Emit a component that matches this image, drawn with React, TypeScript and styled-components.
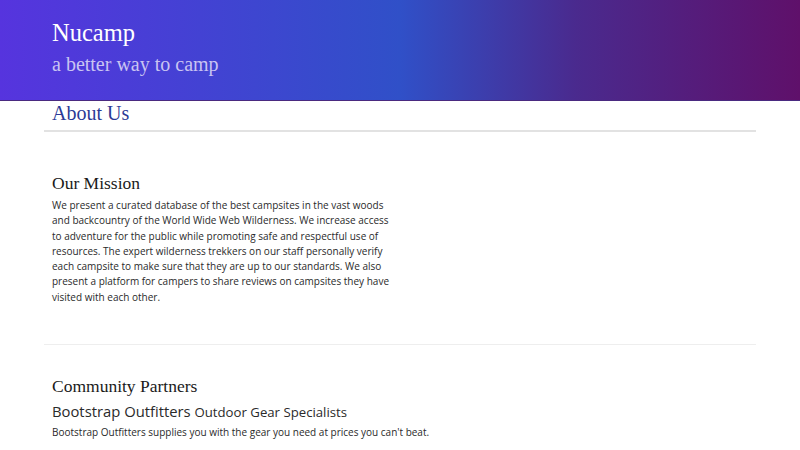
import React from "react";
import styled, { createGlobalStyle } from "styled-components";

const Global = createGlobalStyle`
  html, body { margin: 0; padding: 0; background: #fff; }
  body { font-family: "Open Sans", sans-serif; color: #212529; }
  * { box-sizing: border-box; }
`;

const Jumbotron = styled.header`
  height: 101px;
  background: linear-gradient(90deg, #5634de 0%, #3050c8 50%, #4a2a8e 72%, #5f106a 100%);
  border-bottom: 1px solid #4a2a80;
  padding: 18px 52px 0;
`;

const Brand = styled.h1`
  margin: 0;
  font-family: "Liberation Serif", serif;
  font-weight: 400;
  font-size: 24.5px;
  line-height: 30px;
  color: #ffffff;
`;

const Tagline = styled.h2`
  margin: 4px 0 0;
  font-family: "Liberation Serif", serif;
  font-weight: 400;
  font-size: 20px;
  line-height: 24px;
  color: #c9c4f2;
`;

const Container = styled.main`
  margin: 0 44px;
`;

const PageTitle = styled.h2`
  margin: 0;
  padding: 0 8px 4px;
  font-family: "Liberation Serif", serif;
  font-weight: 400;
  font-size: 20px;
  line-height: 25px;
  color: #2b3a96;
  border-bottom: 2px solid #e2e2e2;
`;

const Section = styled.section<{ $half?: boolean; $top: number }>`
  padding: ${(p) => p.$top}px 8px 0;
  width: ${(p) => (p.$half ? "356px" : "auto")};
`;

const SectionTitle = styled.h3`
  margin: 0 0 3px;
  font-family: "Liberation Serif", serif;
  font-weight: 400;
  font-size: 17.5px;
  line-height: 24px;
  color: #1a1a1a;
`;

const Body = styled.p`
  margin: 0;
  font-size: 10px;
  line-height: 15.3px;
  color: #2a2a2a;
`;

const Divider = styled.hr`
  margin: 39px 0 0;
  border: 0;
  border-top: 1px solid #eeeeee;
`;

const PartnerName = styled.h4`
  margin: 0 0 3px;
  font-weight: 400;
  font-size: 14.8px;
  line-height: 20px;
  color: #2a2a2a;
`;

const PartnerTag = styled.span`
  font-size: 13.2px;
`;

export default function App() {
  return (
    <>
      <Global />
      <Jumbotron>
        <Brand>Nucamp</Brand>
        <Tagline>a better way to camp</Tagline>
      </Jumbotron>
      <Container>
        <PageTitle>About Us</PageTitle>
        <Section $half $top={39}>
          <SectionTitle>Our Mission</SectionTitle>
          <Body>
            We present a curated database of the best campsites in the vast woods and
            backcountry of the World Wide Web Wilderness. We increase access to adventure
            for the public while promoting safe and respectful use of resources. The expert
            wilderness trekkers on our staff personally verify each campsite to make sure
            that they are up to our standards. We also present a platform for campers to
            share reviews on campsites they have visited with each other.
          </Body>
        </Section>
        <Divider />
        <Section $top={29}>
          <SectionTitle>Community Partners</SectionTitle>
          <PartnerName>
            Bootstrap Outfitters <PartnerTag>Outdoor Gear Specialists</PartnerTag>
          </PartnerName>
          <Body>
            Bootstrap Outfitters supplies you with the gear you need at prices you can't beat.
          </Body>
        </Section>
      </Container>
    </>
  );
}
